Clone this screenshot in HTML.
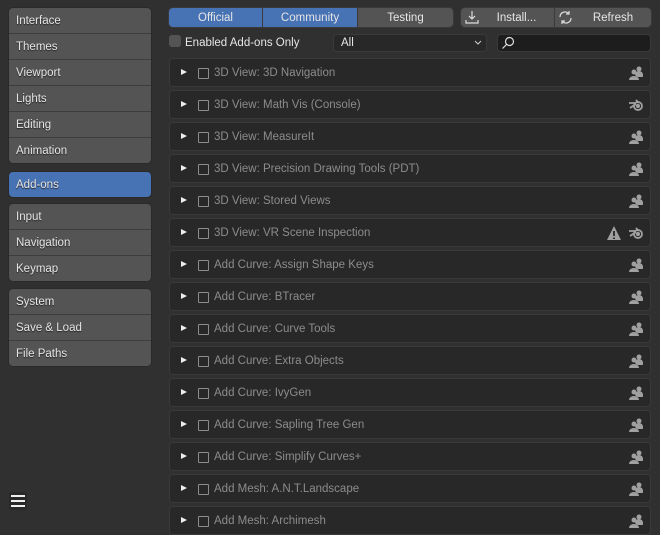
<!DOCTYPE html><html><head><style>
body{margin:0;width:660px;height:520px;background:#303030;overflow:hidden;font-family:"Liberation Sans","DejaVu Sans",sans-serif;font-size:11.5px;color:#e6e6e6;position:relative}
.g{position:absolute;left:9px;width:142px;background:#545454;border-radius:4px;box-shadow:0 0 0 1px #2a2a2a}
.g div{height:25px;line-height:27px;padding-left:7px;border-bottom:1px solid #3d3d3d;text-shadow:0 1px 1px #222}
.g div:last-child{border-bottom:none}
.a{background:#4772b3}
.b{position:absolute;height:19px;line-height:20px;text-align:center;background:#545454;box-shadow:0 0 0 1px #3a3a3a}
.row{position:absolute;left:169px;width:482px;height:29px;background:#282828;border:1px solid #3a3a3a;border-radius:4px;box-sizing:border-box;color:#8c8c8c;line-height:28px}
.row .t{position:absolute;left:11px;top:10px;width:0;height:0;border-left:6px solid #eee;border-top:3.5px solid transparent;border-bottom:3.5px solid transparent}
.row .c{position:absolute;left:28px;top:9px;width:9px;height:9px;border:1px solid #8c8c8c;border-radius:1px}
.row .n{position:absolute;left:44px}
.row svg{position:absolute;right:6px;top:6px}
</style></head><body>
<div class="g" style="top:8px"><div>Interface</div><div>Themes</div><div>Viewport</div><div>Lights</div><div>Editing</div><div>Animation</div></div>
<div class="g a" style="top:172px"><div>Add-ons</div></div>
<div class="g" style="top:204px"><div>Input</div><div>Navigation</div><div>Keymap</div></div>
<div class="g" style="top:289px"><div>System</div><div>Save &amp; Load</div><div>File Paths</div></div>
<div style="position:absolute;left:9px;top:492px;width:18px;height:18px;background:#282828;border-radius:3px"><div style="position:absolute;left:2px;top:3px;width:14px;height:2px;background:#eee;box-shadow:0 5px 0 #eee,0 10px 0 #eee"></div></div>
<div class="b" style="left:169px;top:8px;width:93px;background:#4772b3;border-radius:4px 0 0 4px">Official</div>
<div class="b" style="left:263px;top:8px;width:94px;background:#4772b3">Community</div>
<div class="b" style="left:358px;top:8px;width:95px;border-radius:0 4px 4px 0">Testing</div>
<div class="b" style="left:461px;top:8px;width:93px;border-radius:4px 0 0 4px"><svg style="position:absolute;left:4px;top:2px" width="14" height="14" viewBox="0 0 14 14" fill="none" stroke="#ddd" stroke-width="1.2"><path d="M7 1v8M4 6l3 3 3-3M1 10v3h12v-3"/></svg><span style="padding-left:18px">Install...</span></div>
<div class="b" style="left:555px;top:8px;width:96px;border-radius:0 4px 4px 0"><svg style="position:absolute;left:3px;top:2px" width="15" height="15" viewBox="0 0 15 15" fill="none" stroke="#ddd" stroke-width="1.2"><path d="M2 7a5 5 0 0 1 9-3M13 8a5 5 0 0 1-9 3M11 1v3h-3M4 14v-3h3"/></svg><span style="padding-left:20px">Refresh</span></div>
<div style="position:absolute;left:169px;top:35px;width:12px;height:12px;background:#545454;border-radius:3px"></div>
<div style="position:absolute;left:185px;top:35px;line-height:17px">Enabled Add-ons Only</div>
<div style="position:absolute;left:333px;top:34px;width:154px;height:18px;background:#282828;border:1px solid #3a3a3a;box-sizing:border-box;border-radius:4px;line-height:17px;padding-left:7px">All<svg style="position:absolute;right:4px;top:5px" width="8" height="6"><path d="M1 1l3 3 3-3" stroke="#ccc" fill="none"/></svg></div>
<div style="position:absolute;left:497px;top:34px;width:154px;height:18px;background:#1d1d1d;border:1px solid #3a3a3a;box-sizing:border-box;border-radius:4px"><svg style="position:absolute;left:3px;top:1px" width="14" height="14" fill="none" stroke="#ddd" stroke-width="1.2"><circle cx="8.5" cy="5.5" r="4"/><path d="M5.5 8.5l-4 4"/></svg></div>
<div id="rows"></div>
<script>
var n=["3D View: 3D Navigation","3D View: Math Vis (Console)","3D View: MeasureIt","3D View: Precision Drawing Tools (PDT)","3D View: Stored Views","3D View: VR Scene Inspection","Add Curve: Assign Shape Keys","Add Curve: BTracer","Add Curve: Curve Tools","Add Curve: Extra Objects","Add Curve: IvyGen","Add Curve: Sapling Tree Gen","Add Curve: Simplify Curves+","Add Mesh: A.N.T.Landscape","Add Mesh: Archimesh"];
var comm='<svg width="16" height="16" viewBox="0 0 16 16" fill="#a0a0a0"><circle cx="11" cy="4" r="2.5"/><path d="M7 10a4 4 0 0 1 8 0v2H9z"/><circle cx="6" cy="7" r="2.5"/><path d="M1 15a5 4 0 0 1 10 0z"/></svg>';
var bl='<svg width="16" height="16" viewBox="0 0 16 16" fill="none" stroke="#a0a0a0" stroke-width="1.8"><circle cx="10" cy="9" r="4"/><circle cx="10" cy="9" r="1.2" fill="#a0a0a0"/><path d="M1 6h7M2 11l6-4M8 3l3 3"/></svg>';
var warn='<svg style="right:28px" width="16" height="16" viewBox="0 0 16 16"><path d="M8 1l7 14H1z" fill="#a0a0a0"/><path d="M8 6v5M8 12.5v1.5" stroke="#282828" stroke-width="1.8"/></svg>';
var h="";for(var i=0;i<n.length;i++){var ic=(i==1||i==5)?bl:comm;if(i==5)ic=warn+ic;h+='<div class="row" style="top:'+(58+32*i)+'px"><div class="t"></div><div class="c"></div><span class="n">'+n[i]+'</span>'+ic+'</div>';}
document.getElementById("rows").innerHTML=h;
</script>
</body></html>
